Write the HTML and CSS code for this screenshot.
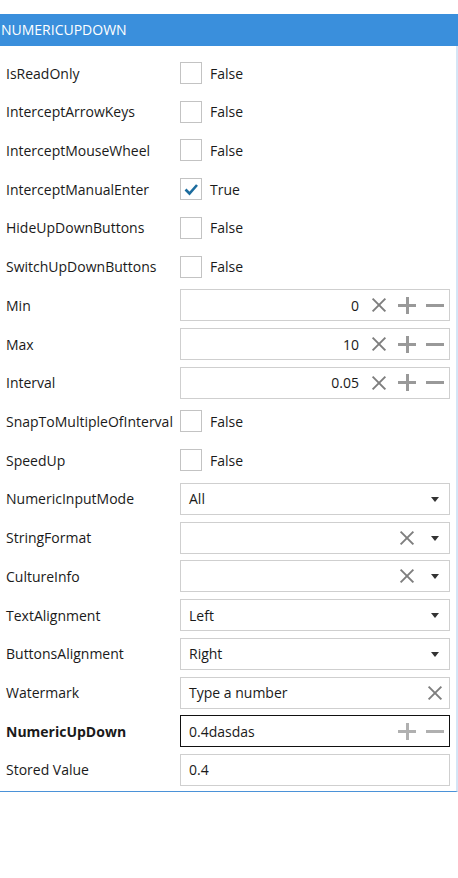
FILE: index.html
```html
<!DOCTYPE html>
<html lang="en">
<head>
  <meta charset="UTF-8" />
  <title>NumericUpDown</title>
  <link rel="stylesheet" href="styles.css">
</head>
<body>

  <div class="panel">
    <div class="panel-header">NumericUpDown</div>

    <div class="props">
      <div class="prop-label">IsReadOnly</div>
      <div class="check"><span class="box"></span>False</div>

      <div class="prop-label">InterceptArrowKeys</div>
      <div class="check"><span class="box"></span>False</div>

      <div class="prop-label">InterceptMouseWheel</div>
      <div class="check"><span class="box"></span>False</div>

      <div class="prop-label">InterceptManualEnter</div>
      <div class="check">
        <span class="box">
          <svg width="20" height="20" viewBox="0 0 20 20"><polyline points="4.5,10.5 8.5,14.5 16,6" fill="none" stroke="#1c6c9e" stroke-width="2.6" /></svg>
        </span>True
      </div>

      <div class="prop-label">HideUpDownButtons</div>
      <div class="check"><span class="box"></span>False</div>

      <div class="prop-label">SwitchUpDownButtons</div>
      <div class="check"><span class="box"></span>False</div>

      <div class="prop-label">Min</div>
      <div class="field num">
        <span class="text">0</span>
        <span class="icon clear"></span><span class="icon plus"></span><span class="icon minus"></span>
      </div>

      <div class="prop-label">Max</div>
      <div class="field num">
        <span class="text">10</span>
        <span class="icon clear"></span><span class="icon plus"></span><span class="icon minus"></span>
      </div>

      <div class="prop-label">Interval</div>
      <div class="field num">
        <span class="text">0.05</span>
        <span class="icon clear"></span><span class="icon plus"></span><span class="icon minus"></span>
      </div>

      <div class="prop-label">SnapToMultipleOfInterval</div>
      <div class="check"><span class="box"></span>False</div>

      <div class="prop-label">SpeedUp</div>
      <div class="check"><span class="box"></span>False</div>

      <div class="prop-label">NumericInputMode</div>
      <div class="field">
        <span class="text">All</span>
        <span class="icon arrow"></span>
      </div>

      <div class="prop-label">StringFormat</div>
      <div class="field">
        <span class="text"></span>
        <span class="icon clear"></span><span class="icon arrow"></span>
      </div>

      <div class="prop-label">CultureInfo</div>
      <div class="field">
        <span class="text"></span>
        <span class="icon clear"></span><span class="icon arrow"></span>
      </div>

      <div class="prop-label">TextAlignment</div>
      <div class="field">
        <span class="text">Left</span>
        <span class="icon arrow"></span>
      </div>

      <div class="prop-label">ButtonsAlignment</div>
      <div class="field">
        <span class="text">Right</span>
        <span class="icon arrow"></span>
      </div>

      <div class="prop-label">Watermark</div>
      <div class="field">
        <span class="text">Type a number</span>
        <span class="icon clear"></span>
      </div>

      <div class="prop-label bold">NumericUpDown</div>
      <div class="field focused">
        <span class="text">0.4dasdas</span>
        <span class="icon plus light"></span><span class="icon minus light"></span>
      </div>

      <div class="prop-label">Stored Value</div>
      <div class="field">
        <span class="text">0.4</span>
      </div>
    </div>
  </div>

</body>
</html>
```

FILE: styles.css
```css
body {
  margin: 0;
  padding-top: 14px;
  background-color: #ffffff;
  font-family: "Open Sans", "Noto Sans", sans-serif;
  font-size: 14px;
  color: #1a1a1a;
}

.panel {
  width: 456px;
  border-right: 2px solid #d5e5f5;
  border-bottom: 1px solid #4b92d8;
}

.panel-header {
  height: 32px;
  line-height: 32px;
  margin-right: -2px;
  padding-left: 1px;
  background-color: #3a8fdc;
  color: #ffffff;
  font-size: 14px;
  text-transform: uppercase;
}

.props {
  display: grid;
  grid-template-columns: 174px 1fr;
  grid-auto-rows: 32px;
  row-gap: 6.72px;
  padding: 11px 6px 5px 6px;
}

.prop-label {
  display: flex;
  align-items: center;
  white-space: nowrap;
}

.prop-label.bold {
  font-weight: bold;
}

.check {
  display: flex;
  align-items: center;
  gap: 8px;
}

.check .box {
  width: 20px;
  height: 20px;
  border: 1px solid #c3c3c3;
  display: flex;
  align-items: center;
  justify-content: center;
}

.field {
  display: flex;
  align-items: center;
  border: 1px solid #cfcfcf;
  padding: 0 0 0 8px;
}

.field.focused {
  border-color: #111111;
}

.field .text {
  flex: 1;
  white-space: nowrap;
}

.field.num .text {
  text-align: right;
  padding-right: 6px;
}

.icon {
  position: relative;
  width: 28px;
  height: 20px;
  flex-shrink: 0;
}

.icon.clear::before,
.icon.clear::after {
  content: "";
  position: absolute;
  left: 5px;
  top: 9px;
  width: 18px;
  height: 2px;
  background-color: #7e7e7e;
  transform: rotate(45deg);
}

.icon.clear::after {
  transform: rotate(-45deg);
}

.icon.plus::before,
.icon.plus::after,
.icon.minus::before {
  content: "";
  position: absolute;
  left: 5px;
  top: 8.5px;
  width: 18px;
  height: 3px;
  background-color: #999999;
}

.icon.plus::after {
  left: 12.5px;
  top: 1.5px;
  width: 3px;
  height: 17px;
}

.icon.light::before,
.icon.light::after {
  background-color: #b0b0b0;
}

.icon.arrow::before {
  content: "";
  position: absolute;
  left: 10px;
  top: 8px;
  border-top: 5px solid #333333;
  border-left: 4px solid transparent;
  border-right: 4px solid transparent;
}
```
